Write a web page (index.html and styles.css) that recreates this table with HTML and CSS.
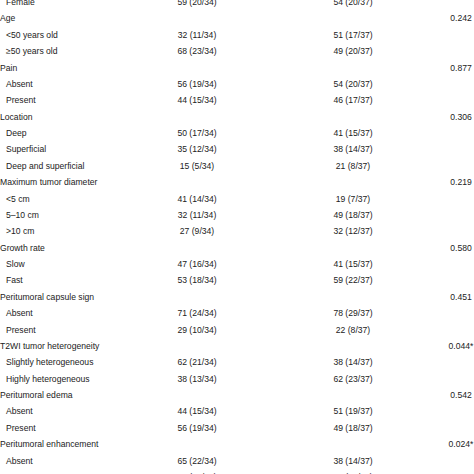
FILE: index.html
```html
<!DOCTYPE html>
<html>
<head>
<meta charset="utf-8">
<link rel="stylesheet" href="styles.css">
</head>
<body>
<div class="table">
  <div class="row sub"><span class="lbl">Female</span><span class="n1">59 (20/34)</span><span class="n2">54 (20/37)</span></div>
  <div class="row"><span class="lbl">Age</span><span class="p">0.242</span></div>
  <div class="row sub"><span class="lbl">&lt;50 years old</span><span class="n1">32 (11/34)</span><span class="n2">51 (17/37)</span></div>
  <div class="row sub"><span class="lbl">≥50 years old</span><span class="n1">68 (23/34)</span><span class="n2">49 (20/37)</span></div>
  <div class="row"><span class="lbl">Pain</span><span class="p">0.877</span></div>
  <div class="row sub"><span class="lbl">Absent</span><span class="n1">56 (19/34)</span><span class="n2">54 (20/37)</span></div>
  <div class="row sub"><span class="lbl">Present</span><span class="n1">44 (15/34)</span><span class="n2">46 (17/37)</span></div>
  <div class="row"><span class="lbl">Location</span><span class="p">0.306</span></div>
  <div class="row sub"><span class="lbl">Deep</span><span class="n1">50 (17/34)</span><span class="n2">41 (15/37)</span></div>
  <div class="row sub"><span class="lbl">Superficial</span><span class="n1">35 (12/34)</span><span class="n2">38 (14/37)</span></div>
  <div class="row sub"><span class="lbl">Deep and superficial</span><span class="n1">15 (5/34)</span><span class="n2">21 (8/37)</span></div>
  <div class="row"><span class="lbl">Maximum tumor diameter</span><span class="p">0.219</span></div>
  <div class="row sub"><span class="lbl">&lt;5 cm</span><span class="n1">41 (14/34)</span><span class="n2">19 (7/37)</span></div>
  <div class="row sub"><span class="lbl">5–10 cm</span><span class="n1">32 (11/34)</span><span class="n2">49 (18/37)</span></div>
  <div class="row sub"><span class="lbl">&gt;10 cm</span><span class="n1">27 (9/34)</span><span class="n2">32 (12/37)</span></div>
  <div class="row"><span class="lbl">Growth rate</span><span class="p">0.580</span></div>
  <div class="row sub"><span class="lbl">Slow</span><span class="n1">47 (16/34)</span><span class="n2">41 (15/37)</span></div>
  <div class="row sub"><span class="lbl">Fast</span><span class="n1">53 (18/34)</span><span class="n2">59 (22/37)</span></div>
  <div class="row"><span class="lbl">Peritumoral capsule sign</span><span class="p">0.451</span></div>
  <div class="row sub"><span class="lbl">Absent</span><span class="n1">71 (24/34)</span><span class="n2">78 (29/37)</span></div>
  <div class="row sub"><span class="lbl">Present</span><span class="n1">29 (10/34)</span><span class="n2">22 (8/37)</span></div>
  <div class="row"><span class="lbl">T2WI tumor heterogeneity</span><span class="p">0.044*</span></div>
  <div class="row sub"><span class="lbl">Slightly heterogeneous</span><span class="n1">62 (21/34)</span><span class="n2">38 (14/37)</span></div>
  <div class="row sub"><span class="lbl">Highly heterogeneous</span><span class="n1">38 (13/34)</span><span class="n2">62 (23/37)</span></div>
  <div class="row"><span class="lbl">Peritumoral edema</span><span class="p">0.542</span></div>
  <div class="row sub"><span class="lbl">Absent</span><span class="n1">44 (15/34)</span><span class="n2">51 (19/37)</span></div>
  <div class="row sub"><span class="lbl">Present</span><span class="n1">56 (19/34)</span><span class="n2">49 (18/37)</span></div>
  <div class="row"><span class="lbl">Peritumoral enhancement</span><span class="p">0.024*</span></div>
  <div class="row sub"><span class="lbl">Absent</span><span class="n1">65 (22/34)</span><span class="n2">38 (14/37)</span></div>
  <div class="row sub"><span class="lbl">Present</span><span class="n1">35 (12/34)</span><span class="n2">62 (23/37)</span></div>
</div>
</body>
</html>
```
FILE: styles.css
```css
html, body {
  margin: 0;
  padding: 0;
  background: #ffffff;
  overflow: hidden;
}
body {
  width: 474px;
  height: 474px;
  font-family: "Liberation Sans", Arial, Helvetica, sans-serif;
  font-size: 8.6px;
  color: #222222;
}
.table {
  margin-top: -6px;
  display: flex;
  flex-direction: column;
}
.row {
  display: grid;
  grid-template-columns: 160px 74px 84px 70px 60px 26px;
  height: 16.38px;
  line-height: 16.38px;
  white-space: nowrap;
}
.lbl {
  grid-column: 1;
}
.sub .lbl {
  padding-left: 6px;
}
.n1 {
  grid-column: 2;
  justify-self: center;
}
.n2 {
  grid-column: 4;
  justify-self: center;
}
.p {
  grid-column: 6;
  justify-self: center;
}
```
